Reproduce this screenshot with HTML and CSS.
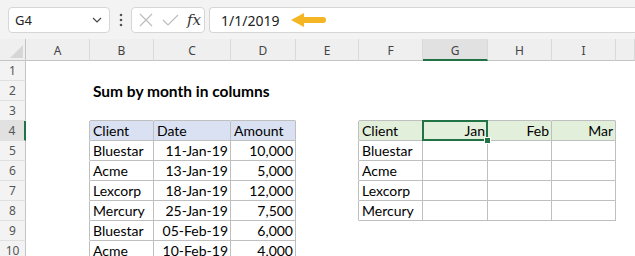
FILE: index.html
```html
<!DOCTYPE html>
<html lang="en">
<head>
    <meta charset="UTF-8">
    <title>Sum by month in columns</title>
    <link rel="stylesheet" href="styles.css">
</head>
<body>

    <div class="toolbar">
        <div class="namebox">
            <span>G4</span>
            <svg width="10" height="6" viewBox="0 0 10 6"><path d="M1 1l4 4 4-4" fill="none" stroke="#444" stroke-width="1.2"/></svg>
        </div>
        <div class="dots">
            <svg width="4" height="14" viewBox="0 0 4 14"><circle cx="2" cy="2" r="1.3"/><circle cx="2" cy="7" r="1.3"/><circle cx="2" cy="12" r="1.3"/></svg>
        </div>
        <div class="fxbox">
            <svg width="14" height="14" viewBox="0 0 14 14"><path d="M1 1l12 12M13 1L1 13" stroke="#bdbdbd" stroke-width="1.2" fill="none"/></svg>
            <svg width="17" height="12" viewBox="0 0 17 12"><path d="M1 6l5 5L16 1" stroke="#bdbdbd" stroke-width="1.2" fill="none"/></svg>
            <span class="fx">fx</span>
        </div>
        <div class="formula">
            <span>1/1/2019</span>
            <svg class="arrow" width="36" height="16" viewBox="0 0 36 16">
                <path d="M0 8L13 1V15Z" fill="#f5b625"/>
                <path d="M10 8H32" stroke="#f5b625" stroke-width="6" stroke-linecap="round"/>
            </svg>
        </div>
    </div>

    <div class="sheet">
        <!-- column headers -->
        <div class="h corner"></div>
        <div class="h">A</div><div class="h">B</div><div class="h">C</div><div class="h">D</div>
        <div class="h">E</div><div class="h">F</div><div class="h hsel">G</div><div class="h">H</div>
        <div class="h">I</div><div class="h"></div>

        <!-- 1 -->
        <div class="n">1</div>
        <div class="c"></div><div class="c"></div><div class="c"></div><div class="c"></div><div class="c"></div>
        <div class="c"></div><div class="c"></div><div class="c"></div><div class="c"></div><div class="c"></div>

        <!-- 2 -->
        <div class="n">2</div>
        <div class="c"></div><div class="c titolo">Sum by month in columns</div><div class="c"></div><div class="c"></div><div class="c"></div>
        <div class="c"></div><div class="c"></div><div class="c"></div><div class="c"></div><div class="c"></div>

        <!-- 3 -->
        <div class="n">3</div>
        <div class="c"></div><div class="c tt"></div><div class="c tt"></div><div class="c tt"></div><div class="c"></div>
        <div class="c tt"></div><div class="c tt"></div><div class="c tt"></div><div class="c tt"></div><div class="c"></div>

        <!-- 4 -->
        <div class="n nsel">4</div>
        <div class="c tl"></div>
        <div class="c t blu">Client</div><div class="c t blu">Date</div><div class="c t blu">Amount</div>
        <div class="c tl"></div>
        <div class="c t verde">Client</div><div class="c t verde r sel">Jan</div><div class="c t verde r">Feb</div><div class="c t verde r">Mar</div>
        <div class="c"></div>

        <!-- 5 -->
        <div class="n">5</div>
        <div class="c tl"></div>
        <div class="c t">Bluestar</div><div class="c t r">11-Jan-19</div><div class="c t r">10,000</div>
        <div class="c tl"></div>
        <div class="c t">Bluestar</div><div class="c t"></div><div class="c t"></div><div class="c t"></div>
        <div class="c"></div>

        <!-- 6 -->
        <div class="n">6</div>
        <div class="c tl"></div>
        <div class="c t">Acme</div><div class="c t r">13-Jan-19</div><div class="c t r">5,000</div>
        <div class="c tl"></div>
        <div class="c t">Acme</div><div class="c t"></div><div class="c t"></div><div class="c t"></div>
        <div class="c"></div>

        <!-- 7 -->
        <div class="n">7</div>
        <div class="c tl"></div>
        <div class="c t">Lexcorp</div><div class="c t r">18-Jan-19</div><div class="c t r">12,000</div>
        <div class="c tl"></div>
        <div class="c t">Lexcorp</div><div class="c t"></div><div class="c t"></div><div class="c t"></div>
        <div class="c"></div>

        <!-- 8 -->
        <div class="n">8</div>
        <div class="c tl"></div>
        <div class="c t">Mercury</div><div class="c t r">25-Jan-19</div><div class="c t r">7,500</div>
        <div class="c tl"></div>
        <div class="c t">Mercury</div><div class="c t"></div><div class="c t"></div><div class="c t"></div>
        <div class="c"></div>

        <!-- 9 -->
        <div class="n">9</div>
        <div class="c tl"></div>
        <div class="c t">Bluestar</div><div class="c t r">05-Feb-19</div><div class="c t r">6,000</div>
        <div class="c"></div>
        <div class="c"></div><div class="c"></div><div class="c"></div><div class="c"></div>
        <div class="c"></div>

        <!-- 10 -->
        <div class="n">10</div>
        <div class="c tl"></div>
        <div class="c t">Acme</div><div class="c t r">10-Feb-19</div><div class="c t r">4,000</div>
        <div class="c"></div>
        <div class="c"></div><div class="c"></div><div class="c"></div><div class="c"></div>
        <div class="c"></div>
    </div>

</body>
</html>
```

FILE: styles.css
```css
body {
    margin: 0;
    width: 635px;
    height: 256px;
    overflow: hidden;
    background-color: #fff;
    font-family: Lato, "Liberation Sans", sans-serif;
    color: #000;
}

/* barra della formula */
.toolbar {
    display: flex;
    align-items: flex-start;
    height: 39px;
    padding: 7px 0 0 8px;
    box-sizing: border-box;
    background-color: #f3f3f3;
    font-family: "Noto Sans", "Open Sans", sans-serif;
}

.namebox {
    display: flex;
    align-items: center;
    justify-content: space-between;
    width: 102px;
    height: 26px;
    padding: 0 7px 0 6px;
    box-sizing: border-box;
    background-color: #fff;
    border: 1px solid #d6d6d6;
    border-radius: 4px;
    font-size: 13px;
    color: #222;
}

.dots {
    display: flex;
    align-items: center;
    justify-content: center;
    width: 21px;
    height: 26px;
    fill: #555;
}

.fxbox {
    display: flex;
    align-items: center;
    gap: 9px;
    width: 74px;
    height: 26px;
    padding-left: 7px;
    box-sizing: border-box;
    background-color: #fff;
    border: 1px solid #d6d6d6;
    border-radius: 4px;
}

.fx {
    font-family: "DejaVu Serif", "Liberation Serif", serif;
    font-style: italic;
    font-size: 15px;
    color: #333;
    margin-left: -1px;
}

.formula {
    display: flex;
    align-items: center;
    gap: 12px;
    flex: 1;
    height: 26px;
    margin-left: 4px;
    padding-left: 11px;
    box-sizing: border-box;
    background-color: #fff;
    border: 1px solid #d6d6d6;
    border-right: none;
    border-radius: 4px 0 0 4px;
    font-size: 14px;
    color: #222;
}

/* foglio */
.sheet {
    display: grid;
    grid-template-columns: 26px 64px 64px 77px 65px 63px 64px 65px 64px 64px 19px;
    grid-template-rows: 22px repeat(10, 20px);
}

.h {
    background-color: #efefef;
    border-right: 1px solid #d9d9d9;
    border-bottom: 1px solid #c4c4c4;
    box-sizing: border-box;
    text-align: center;
    font-family: "Noto Sans", "Open Sans", sans-serif;
    font-size: 12px;
    line-height: 23px;
    color: #444;
}

.corner {
    position: relative;
    border-right-color: #c4c4c4;
}

.corner::after {
    content: "";
    position: absolute;
    right: 2px;
    bottom: 2px;
    border-left: 13px solid transparent;
    border-bottom: 13px solid #d6d6d6;
}

.hsel {
    background-color: #e1e1e1;
    border-bottom: 2px solid #217346;
}

.n {
    background-color: #f3f3f3;
    border-right: 1px solid #c4c4c4;
    border-bottom: 1px solid #e0e0e0;
    box-sizing: border-box;
    text-align: center;
    font-family: "Noto Sans", "Open Sans", sans-serif;
    font-size: 12px;
    line-height: 20px;
    color: #555;
}

.nsel {
    background-color: #e1e1e1;
    border-right: 2px solid #217346;
}

.c {
    border-right: 1px solid transparent;
    border-bottom: 1px solid transparent;
    box-sizing: border-box;
    padding: 0 3px;
    font-size: 14px;
    line-height: 20px;
    white-space: nowrap;
}

.titolo {
    font-weight: bold;
    font-size: 15.5px;
}

.r {
    text-align: right;
    padding-right: 2px;
}

.t {
    border-right-color: #bfbfbf;
    border-bottom-color: #bfbfbf;
}

.tl {
    border-right-color: #bfbfbf;
}

.tt {
    border-bottom-color: #bfbfbf;
}

.blu {
    background-color: #d9e1f2;
}

.verde {
    background-color: #e2efda;
}

/* cella selezionata */
.sel {
    position: relative;
}

.sel::before {
    content: "";
    position: absolute;
    top: -1px;
    left: -1px;
    right: -1px;
    bottom: -1px;
    border: 2px solid #217346;
}

.sel::after {
    content: "";
    position: absolute;
    right: -4px;
    bottom: -4px;
    width: 5px;
    height: 5px;
    background-color: #217346;
    border: 1px solid #fff;
}
```
